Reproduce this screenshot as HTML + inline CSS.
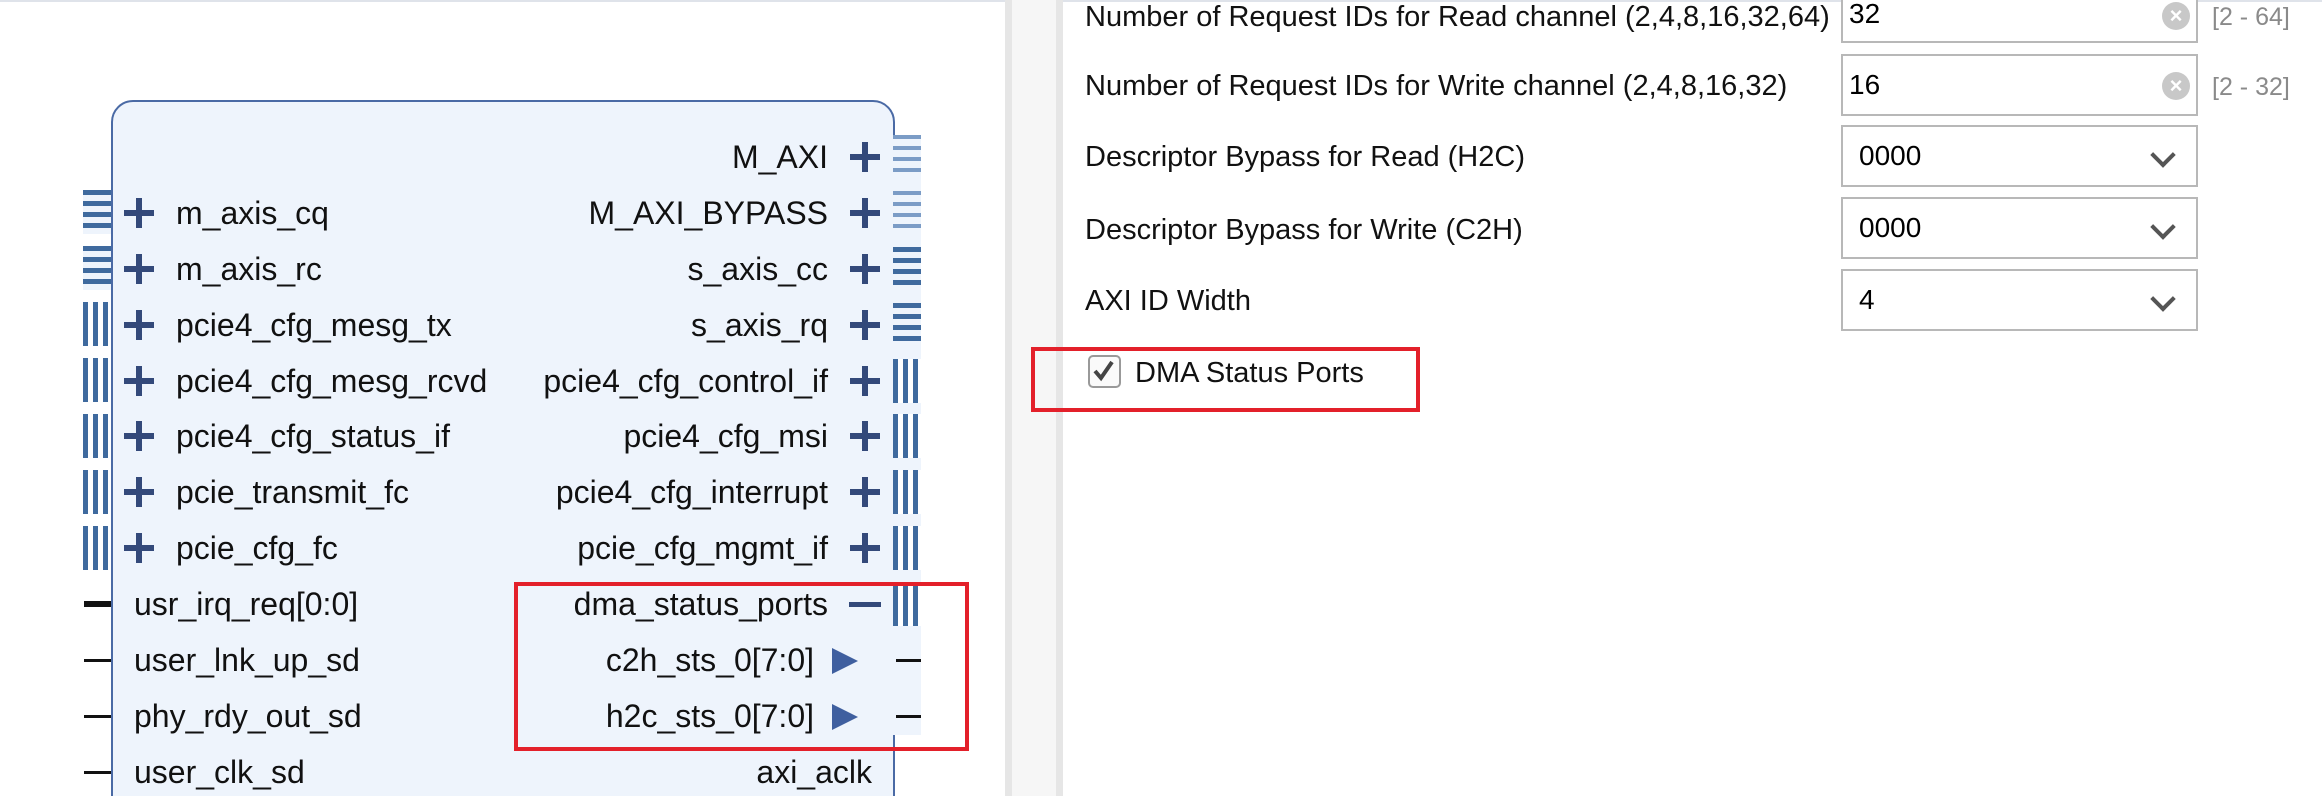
<!DOCTYPE html>
<html style="width:2322px;height:796px;overflow:hidden"><head><meta charset="utf-8"><style>
html,body{overflow:hidden}
body{margin:0;width:2322px;height:796px;background:#fff;position:relative;overflow:hidden;font-family:"Liberation Sans",sans-serif;}
.a{position:absolute}
.box{left:111px;top:100px;width:780px;height:720px;border:2px solid #4a6aa5;border-radius:22px;background:#eef4fc}
.lt,.rt{position:absolute;font-size:32px;color:#111;line-height:40px;white-space:nowrap}
.rt{text-align:right;right:1494px}
.plus{position:absolute;width:30px;height:30px}
.plus:before{content:"";position:absolute;left:0;top:12px;width:30px;height:6px;background:#33497a}
.plus:after{content:"";position:absolute;left:12px;top:0;width:6px;height:30px;background:#33497a}
.hb{position:absolute;width:28px;height:44px;background:repeating-linear-gradient(180deg,#3f6a9e 0 5px,#eef4fc 5px 11px)}
.vb{position:absolute;width:28px;height:44px;background:repeating-linear-gradient(90deg,#3f6a9e 0 5px,#fff 5px 10px)}
.lb{position:absolute;width:28px;height:44px;background:repeating-linear-gradient(180deg,#7b9cc6 0 4px,#eef4fc 4px 11px)}
.lab{position:absolute;left:1085px;font-size:29px;color:#111;line-height:34px;white-space:nowrap}
.inp{position:absolute;left:1841px;width:353px;height:58px;border:2px solid #b8b8b8;background:#fff;font-size:28px;line-height:58px;box-sizing:content-box}
.rng{position:absolute;left:2212px;font-size:25px;color:#8a8a8a;line-height:34px}
.clr{position:absolute;width:28px;height:28px;border-radius:50%;background:#c8c8c8;color:#fff;font-size:22px;line-height:28px;text-align:center;font-weight:bold}
.chev{position:absolute;width:14px;height:14px;border-right:4px solid #555;border-bottom:4px solid #555;transform:rotate(45deg)}
</style></head><body>
<div class="a" style="left:0;top:0;width:2322px;height:2px;background:#dfe3ea"></div>
<div class="a" style="left:1005px;top:0;width:58px;height:796px;background:#f6f6f6;border-left:7px solid #e6e6e6;border-right:7px solid #e6e6e6;box-sizing:border-box"></div>
<div class="a box"></div>
<div class="a" style="left:893px;top:135px;width:28px;height:600px;background:#eef4fc"></div>

<div class="rt" style="top:137px">M_AXI</div>
<div class="rt" style="top:193px">M_AXI_BYPASS</div>
<div class="rt" style="top:249px">s_axis_cc</div>
<div class="rt" style="top:305px">s_axis_rq</div>
<div class="rt" style="top:361px">pcie4_cfg_control_if</div>
<div class="rt" style="top:416px">pcie4_cfg_msi</div>
<div class="rt" style="top:472px">pcie4_cfg_interrupt</div>
<div class="rt" style="top:528px">pcie_cfg_mgmt_if</div>
<div class="rt" style="top:584px">dma_status_ports</div>
<div class="rt" style="top:640px;right:1508px">c2h_sts_0[7:0]</div>
<div class="rt" style="top:696px;right:1508px">h2c_sts_0[7:0]</div>
<div class="rt" style="top:752px;right:1450px">axi_aclk</div>

<div class="plus" style="left:850px;top:142px"></div>
<div class="plus" style="left:850px;top:198px"></div>
<div class="plus" style="left:850px;top:254px"></div>
<div class="plus" style="left:850px;top:310px"></div>
<div class="plus" style="left:850px;top:366px"></div>
<div class="plus" style="left:850px;top:421px"></div>
<div class="plus" style="left:850px;top:477px"></div>
<div class="plus" style="left:850px;top:533px"></div>
<div class="a" style="left:849px;top:602px;width:32px;height:5px;background:#33497a"></div>
<svg class="a" style="left:832px;top:648px" width="26" height="26"><polygon points="0,0 26,13 0,26" fill="#3f5f9f"/></svg>
<svg class="a" style="left:832px;top:704px" width="26" height="26"><polygon points="0,0 26,13 0,26" fill="#3f5f9f"/></svg>
<div class="a" style="left:896px;top:659px;width:25px;height:3px;background:#111"></div>
<div class="a" style="left:896px;top:715px;width:25px;height:3px;background:#111"></div>

<div class="lb" style="left:893px;top:135px"></div>
<div class="lb" style="left:893px;top:191px"></div>
<div class="hb" style="left:893px;top:247px"></div>
<div class="hb" style="left:893px;top:303px"></div>
<div class="vb" style="left:893px;top:359px"></div>
<div class="vb" style="left:893px;top:414px"></div>
<div class="vb" style="left:893px;top:470px"></div>
<div class="vb" style="left:893px;top:526px"></div>
<div class="vb" style="left:893px;top:582px"></div>

<div class="lt" style="left:176px;top:193px">m_axis_cq</div>
<div class="lt" style="left:176px;top:249px">m_axis_rc</div>
<div class="lt" style="left:176px;top:305px">pcie4_cfg_mesg_tx</div>
<div class="lt" style="left:176px;top:361px">pcie4_cfg_mesg_rcvd</div>
<div class="lt" style="left:176px;top:416px">pcie4_cfg_status_if</div>
<div class="lt" style="left:176px;top:472px">pcie_transmit_fc</div>
<div class="lt" style="left:176px;top:528px">pcie_cfg_fc</div>
<div class="lt" style="left:134px;top:584px">usr_irq_req[0:0]</div>
<div class="lt" style="left:134px;top:640px">user_lnk_up_sd</div>
<div class="lt" style="left:134px;top:696px">phy_rdy_out_sd</div>
<div class="lt" style="left:134px;top:752px">user_clk_sd</div>

<div class="plus" style="left:124px;top:198px"></div>
<div class="plus" style="left:124px;top:254px"></div>
<div class="plus" style="left:124px;top:310px"></div>
<div class="plus" style="left:124px;top:366px"></div>
<div class="plus" style="left:124px;top:421px"></div>
<div class="plus" style="left:124px;top:477px"></div>
<div class="plus" style="left:124px;top:533px"></div>
<div class="hb" style="left:83px;top:190px"></div>
<div class="hb" style="left:83px;top:246px"></div>
<div class="vb" style="left:83px;top:302px"></div>
<div class="vb" style="left:83px;top:358px"></div>
<div class="vb" style="left:83px;top:414px"></div>
<div class="vb" style="left:83px;top:470px"></div>
<div class="vb" style="left:83px;top:526px"></div>
<div class="a" style="left:84px;top:601px;width:27px;height:6px;background:#111"></div>
<div class="a" style="left:84px;top:659px;width:27px;height:3px;background:#111"></div>
<div class="a" style="left:84px;top:715px;width:27px;height:3px;background:#111"></div>
<div class="a" style="left:84px;top:771px;width:27px;height:3px;background:#111"></div>

<div class="a" style="left:514px;top:582px;width:447px;height:161px;border:4px solid #e3202a"></div>

<div class="lab" style="top:0px">Number of Request IDs for Read channel (2,4,8,16,32,64)</div>
<div class="lab" style="top:69px">Number of Request IDs for Write channel (2,4,8,16,32)</div>
<div class="lab" style="top:140px">Descriptor Bypass for Read (H2C)</div>
<div class="lab" style="top:213px">Descriptor Bypass for Write (C2H)</div>
<div class="lab" style="top:284px">AXI ID Width</div>

<div class="inp" style="top:-19px"><span style="position:absolute;left:6px;top:2px">32</span></div>
<div class="clr" style="left:2162px;top:2px">×</div>
<div class="rng" style="top:0px">[2 - 64]</div>
<div class="inp" style="top:54px"><span style="position:absolute;left:6px">16</span></div>
<div class="clr" style="left:2162px;top:72px">×</div>
<div class="rng" style="top:70px">[2 - 32]</div>
<div class="inp" style="top:125px"><span style="position:absolute;left:16px">0000</span></div>
<div class="chev" style="left:2154px;top:146px"></div>
<div class="inp" style="top:197px"><span style="position:absolute;left:16px">0000</span></div>
<div class="chev" style="left:2154px;top:218px"></div>
<div class="inp" style="top:269px"><span style="position:absolute;left:16px">4</span></div>
<div class="chev" style="left:2154px;top:290px"></div>

<div class="a" style="left:1031px;top:347px;width:381px;height:57px;border:4px solid #e3202a"></div>
<div class="a" style="left:1088px;top:355px;width:29px;height:29px;border:2px solid #999;border-radius:5px;background:#fafafa"></div>
<svg class="a" style="left:1091px;top:358px" width="26" height="26"><path d="M4 13 L10 20 L21 4" stroke="#444" stroke-width="4" fill="none"/></svg>
<div class="lab" style="left:1135px;top:356px">DMA Status Ports</div>
</body></html>
